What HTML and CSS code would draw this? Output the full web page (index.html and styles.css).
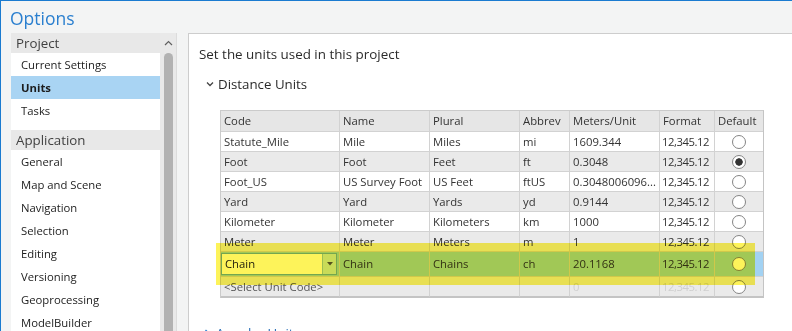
FILE: index.html
```html
<!DOCTYPE html>
<html>
<head>
<meta charset="utf-8">
<link rel="stylesheet" href="styles.css">
</head>
<body>
<div class="window">
  <div class="titlebar">Options</div>
  <div class="content">
    <div class="nav">
      <div class="nav-list">
        <div class="nav-header">Project</div>
        <div class="nav-item">Current Settings</div>
        <div class="nav-item selected">Units</div>
        <div class="nav-item">Tasks</div>
        <div class="nav-header second">Application</div>
        <div class="nav-item">General</div>
        <div class="nav-item">Map and Scene</div>
        <div class="nav-item">Navigation</div>
        <div class="nav-item">Selection</div>
        <div class="nav-item">Editing</div>
        <div class="nav-item">Versioning</div>
        <div class="nav-item">Geoprocessing</div>
        <div class="nav-item">ModelBuilder</div>
      </div>
      <div class="scrollbar">
        <div class="sb-up"><svg width="9" height="6" viewBox="0 0 9 6"><polyline points="1,5 4.5,1.5 8,5" fill="none" stroke="#606060" stroke-width="1.2"/></svg></div>
        <div class="sb-thumb"></div>
      </div>
    </div>
    <div class="main">
      <h1 class="heading">Set the units used in this project</h1>
      <div class="section-title"><svg class="chev" width="8" height="6" viewBox="0 0 8 6"><polyline points="1,1.5 4,4.5 7,1.5" fill="none" stroke="#444" stroke-width="1.3"/></svg><span>Distance Units</span></div>
      <div class="table-wrap">
        <table class="units">
          <thead>
            <tr>
              <th class="c-code">Code</th><th class="c-name">Name</th><th class="c-plural">Plural</th><th class="c-abbr">Abbrev</th><th class="c-mpu">Meters/Unit</th><th class="c-fmt">Format</th><th class="c-def">Default</th>
            </tr>
          </thead>
          <tbody>
            <tr><td>Statute_Mile</td><td>Mile</td><td>Miles</td><td>mi</td><td>1609.344</td><td class="fmt">12,345.12</td><td class="def"><span class="radio"></span></td></tr>
            <tr class="alt"><td>Foot</td><td>Foot</td><td>Feet</td><td>ft</td><td>0.3048</td><td class="fmt">12,345.12</td><td class="def"><span class="radio checked"></span></td></tr>
            <tr><td>Foot_US</td><td>US Survey Foot</td><td>US Feet</td><td>ftUS</td><td>0.3048006096...</td><td class="fmt">12,345.12</td><td class="def"><span class="radio"></span></td></tr>
            <tr class="alt"><td>Yard</td><td>Yard</td><td>Yards</td><td>yd</td><td>0.9144</td><td class="fmt">12,345.12</td><td class="def"><span class="radio"></span></td></tr>
            <tr><td>Kilometer</td><td>Kilometer</td><td>Kilometers</td><td>km</td><td>1000</td><td class="fmt">12,345.12</td><td class="def"><span class="radio"></span></td></tr>
            <tr class="alt"><td>Meter</td><td>Meter</td><td>Meters</td><td>m</td><td>1</td><td class="fmt">12,345.12</td><td class="def"><span class="radio"></span></td></tr>
            <tr class="sel">
              <td class="edit"><div class="combo"><span class="combo-text">Chain</span><span class="combo-btn"><svg width="6" height="4" viewBox="0 0 6 4"><polygon points="0,0 6,0 3,3.5" fill="#555"/></svg></span></div></td>
              <td>Chain</td><td>Chains</td><td>ch</td><td>20.1168</td><td class="fmt">12,345.12</td><td class="def"><span class="radio"></span></td>
            </tr>
            <tr class="alt new"><td class="placeholder">&lt;Select Unit Code&gt;</td><td></td><td></td><td></td><td class="faint">0</td><td class="faint fmt">12,345.12</td><td class="def"><span class="radio"></span></td></tr>
          </tbody>
        </table>
        <div class="highlight"></div>
      </div>
      <div class="section-title collapsed"><svg class="chev" width="6" height="8" viewBox="0 0 6 8"><polyline points="1.5,1 4.5,4 1.5,7" fill="none" stroke="#2a7fd0" stroke-width="1.4"/></svg><span>Angular Units</span></div>
    </div>
  </div>
</div>
</body>
</html>
```
FILE: styles.css
```css
body {
  margin: 0;
  font-family: "Open Sans", "Noto Sans", sans-serif;
}

.window {
  width: 792px;
  height: 331px;
  box-sizing: border-box;
  border-left: 1px solid #1a7bd0;
  border-top: 1px solid #1a7bd0;
  background: #f3f4f4;
  overflow: hidden;
  display: flex;
  flex-direction: column;
}

.titlebar {
  flex: none;
  height: 32px;
  box-sizing: border-box;
  padding: 1px 0 0 9px;
  font-size: 17.5px;
  line-height: 32px;
  color: #2a7fcf;
}

.content {
  flex: 1;
  min-height: 0;
  display: flex;
  gap: 11px;
  padding-left: 10px;
}

.nav {
  flex: none;
  width: 166px;
  display: flex;
}

.nav-list {
  flex: 1;
  background: #fff;
}

.nav-header {
  height: 20px;
  line-height: 20px;
  padding-left: 5px;
  background: #e8e8e8;
  font-size: 13.3px;
  color: #414141;
}

.nav-header.second {
  margin-top: 8px;
}

.nav-item {
  height: 23px;
  line-height: 23px;
  padding-left: 10px;
  font-size: 11.3px;
  color: #1c1c1c;
}

.nav-item.selected {
  background: #a9d4f3;
  font-weight: 700;
}

.scrollbar {
  flex: none;
  width: 16px;
  background: #e9e9e9;
  border-right: 1px solid #dcdcdc;
  display: flex;
  flex-direction: column;
  align-items: center;
}

.sb-up {
  height: 20px;
  display: flex;
  align-items: center;
  justify-content: center;
}

.sb-thumb {
  flex: 1;
  width: 9px;
  background: #b2b2b2;
  border-radius: 5px 5px 0 0;
}

.main {
  flex: 1;
  background: #fff;
  border-left: 1px solid #cdcdcd;
  border-top: 1px solid #cdcdcd;
  padding: 10px 0 0 10px;
  color: #2b2b2b;
}

.heading {
  margin: 0;
  font-weight: normal;
  font-size: 13.4px;
  line-height: 20px;
  color: #2b2b2b;
}

.section-title {
  margin-top: 10px;
  height: 20px;
  display: flex;
  align-items: center;
  padding-left: 7px;
  gap: 4px;
  font-size: 13.3px;
  color: #2b2b2b;
}

.section-title.collapsed {
  margin-top: 25px;
  padding-left: 5px;
  gap: 6px;
  color: #2a6fb8;
}

.table-wrap {
  position: relative;
  margin: 16px 0 0 21px;
  width: fit-content;
}

.units {
  border-collapse: separate;
  border-spacing: 0;
  table-layout: fixed;
  width: 544px;
  border-left: 1px solid #cbcbcb;
  border-top: 1px solid #cbcbcb;
  border-right: 1px solid #c4c4c4;
  border-bottom: 1px solid #c4c4c4;
  font-size: 11.3px;
  color: #333;
}

.units th,
.units td {
  box-sizing: border-box;
  padding: 0 0 0 3px;
  border-right: 1px solid #d2d2d2;
  border-bottom: 1px solid #d2d2d2;
  text-align: left;
  font-weight: normal;
  white-space: nowrap;
  overflow: hidden;
  line-height: 19px;
}

.units th {
  background: #e6e6e6;
  line-height: 20px;
}

.units th:last-child,
.units td:last-child {
  border-right: none;
}

.units td.fmt {
  letter-spacing: -0.45px;
  padding-left: 2px;
}

.c-code { width: 119px; }
.c-name { width: 90px; }
.c-plural { width: 90px; }
.c-abbr { width: 50px; }
.c-mpu { width: 90px; }
.c-fmt { width: 55px; }
.c-def { width: 48px; }

.units tr.alt td {
  background: #eaeaea;
}

.units tr.new td {
  border-bottom-color: #c4c4c4;
}

.units tr.sel td {
  background: #a2d2f3;
  line-height: 24px;
}

.units td.def {
  padding: 0;
  text-align: center;
}

.radio {
  display: inline-block;
  width: 14px;
  height: 14px;
  box-sizing: border-box;
  border: 1px solid #858585;
  border-radius: 50%;
  background: #fff;
  vertical-align: middle;
  position: relative;
  top: -1px;
}

.radio.checked {
  background: radial-gradient(circle, #333 0 3.4px, #fff 4px);
}

.units td.edit {
  padding: 1px 2px 1px 0;
  line-height: 20px;
}

.combo {
  display: flex;
  height: 22px;
  box-sizing: border-box;
  border: 1px solid #75aee0;
  background: #fff;
}

.combo-text {
  flex: 1;
  padding-left: 3px;
  line-height: 20px;
  color: #222;
}

.combo-btn {
  width: 13px;
  border-left: 1px solid #9cc8ea;
  background: #cbe6f9;
  display: flex;
  align-items: center;
  justify-content: center;
}

.placeholder {
  color: #555;
}

.faint {
  color: #cfcfcf;
}

.highlight {
  position: absolute;
  left: -4px;
  top: 133px;
  width: 539px;
  height: 42px;
  background: #fdf35a;
  mix-blend-mode: multiply;
}
```
